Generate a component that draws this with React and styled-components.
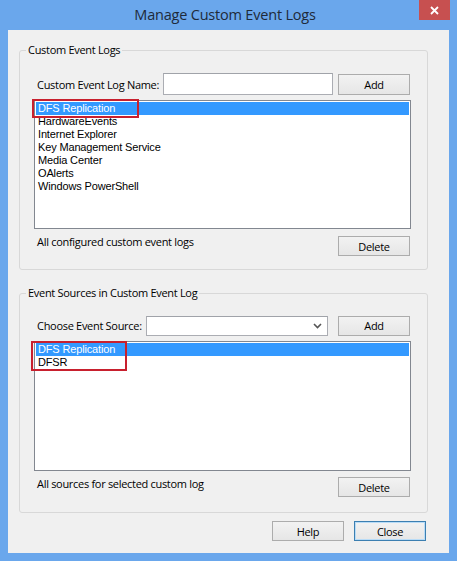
import React from 'react';
import styled, { createGlobalStyle } from 'styled-components';

const GlobalStyle = createGlobalStyle`
  html, body {
    margin: 0;
    padding: 0;
    background: #6aa7ec;
  }
`;

const uiFont = `"Open Sans", "Noto Sans", sans-serif`;
const listFont = `"Liberation Sans", Arial, sans-serif`;

const Window = styled.div`
  width: 457px;
  height: 561px;
  box-sizing: border-box;
  background: #6aa7ec;
  padding: 0 8px 8px 8px;
  display: flex;
  flex-direction: column;
`;

const TitleBar = styled.div`
  height: 30px;
  margin: 0 -1px 0 -8px;
  display: grid;
  grid-template-columns: 1fr auto 1fr;
  align-items: start;
`;

const Title = styled.div`
  grid-column: 2;
  padding-top: 5px;
  font-family: ${uiFont};
  font-size: 14.5px;
  letter-spacing: -0.2px;
  color: #1e2a3a;
  line-height: 20px;
`;

const CloseX = styled.div`
  grid-column: 3;
  justify-self: end;
  width: 31px;
  height: 20px;
  background: #c75050;
  display: flex;
  align-items: center;
  justify-content: center;
`;

const Client = styled.div`
  flex: 1;
  background: #f0f0f0;
  padding: 12px 21px 11px 11px;
  display: flex;
  flex-direction: column;
  font-family: ${uiFont};
  font-size: 11px;
  letter-spacing: -0.3px;
  color: #000;
`;

const Group = styled.fieldset`
  margin: 0 0 ${(p) => p.$gap || 0}px 0;
  min-width: 0;
  border: 1px solid #d8d8d8;
  border-radius: 3px;
  padding: ${(p) => p.$top}px 16px ${(p) => p.$bottom}px 14px;
  display: flex;
  flex-direction: column;
`;

const Legend = styled.legend`
  margin-left: -8px;
  padding: 0 2px;
  line-height: 16px;
  color: #000;
`;

const Row = styled.div`
  display: flex;
  align-items: center;
  height: ${(p) => p.$h}px;
`;

const Label = styled.div`
  flex: 1;
  padding-left: 3px;
  white-space: nowrap;
`;

const TextInput = styled.div`
  width: ${(p) => p.$w}px;
  height: ${(p) => p.$h}px;
  box-sizing: border-box;
  background: #fff;
  border: 1px solid #abadb3;
  border-top-color: #a0a3a9;
  display: flex;
  align-items: center;
  justify-content: flex-end;
  padding-right: 5px;
`;

const Button = styled.div`
  width: 72px;
  height: ${(p) => p.$h || 20}px;
  margin-left: ${(p) => p.$ml || 0}px;
  margin-right: 1px;
  margin-top: ${(p) => p.$mt || 0}px;
  box-sizing: border-box;
  border: 1px solid ${(p) => (p.$default ? '#3c7fb1' : '#acacac')};
  box-shadow: ${(p) => (p.$default ? 'inset 0 0 0 1px #b9dcf7' : 'none')};
  background: linear-gradient(#f2f2f2, #e6e6e6);
  display: flex;
  align-items: center;
  justify-content: center;
  line-height: 1;
  flex-shrink: 0;
`;

const ListBox = styled.div`
  position: relative;
  margin-top: 5px;
  height: ${(p) => p.$h}px;
  box-sizing: border-box;
  background: #fff;
  border: 1px solid #828790;
  padding: 1px 1px 0 1px;
  font-family: ${listFont};
  font-size: 11px;
  letter-spacing: -0.15px;
`;

const ListItem = styled.div`
  height: 13px;
  line-height: 13px;
  padding-left: 2px;
  white-space: nowrap;
  color: ${(p) => (p.$selected ? '#fff' : '#000')};
  background: ${(p) => (p.$selected ? '#3399ff' : 'transparent')};
`;

const Highlight = styled.div`
  position: absolute;
  left: ${(p) => p.$x}px;
  top: ${(p) => p.$y}px;
  width: ${(p) => p.$w}px;
  height: ${(p) => p.$h}px;
  box-sizing: border-box;
  border: 2px solid #c8202e;
  pointer-events: none;
`;

const Footer = styled.div`
  display: flex;
  align-items: flex-start;
  margin-top: 5px;
`;

const Note = styled.div`
  flex: 1;
  padding-left: 3px;
  line-height: 16px;
`;

const DialogButtons = styled.div`
  display: flex;
  justify-content: flex-end;
  gap: 9px;
  padding-right: 1px;
`;

const logs = [
  'DFS Replication',
  'HardwareEvents',
  'Internet Explorer',
  'Key Management Service',
  'Media Center',
  'OAlerts',
  'Windows PowerShell',
];

const sources = ['DFS Replication', 'DFSR'];

function Chevron() {
  return (
    <svg width="9" height="6" viewBox="0 0 9 6">
      <path d="M1 1 L4.5 4.5 L8 1" fill="none" stroke="#555" strokeWidth="1.6" />
    </svg>
  );
}

export default function App() {
  return (
    <>
      <GlobalStyle />
      <Window>
        <TitleBar>
          <Title>Manage Custom Event Logs</Title>
          <CloseX>
            <svg width="9" height="9" viewBox="0 0 9 9">
              <path d="M1 1 L8 8 M8 1 L1 8" stroke="#fff" strokeWidth="1.8" />
            </svg>
          </CloseX>
        </TitleBar>
        <Client>
          <Group $gap={15} $top={15} $bottom={13}>
            <Legend>Custom Event Logs</Legend>
            <Row $h={22}>
              <Label>Custom Event Log Name:</Label>
              <TextInput $w={170} $h={22} />
              <Button $ml={5} $h={21}>Add</Button>
            </Row>
            <ListBox $h={129}>
              {logs.map((l, i) => (
                <ListItem key={l} $selected={i === 0}>{l}</ListItem>
              ))}
              <Highlight $x={-3} $y={-2} $w={107} $h={19} />
            </ListBox>
            <Footer>
              <Note>All configured custom event logs</Note>
              <Button $mt={2}>Delete</Button>
            </Footer>
          </Group>
          <Group $gap={8} $top={14} $bottom={15}>
            <Legend>Event Sources in Custom Event Log</Legend>
            <Row $h={21}>
              <Label>Choose Event Source:</Label>
              <TextInput $w={182} $h={20}>
                <Chevron />
              </TextInput>
              <Button $ml={10}>Add</Button>
            </Row>
            <ListBox $h={130}>
              {sources.map((s, i) => (
                <ListItem key={s} $selected={i === 0}>{s}</ListItem>
              ))}
              <Highlight $x={-4} $y={-1} $w={96} $h={30} />
            </ListBox>
            <Footer>
              <Note>All sources for selected custom log</Note>
              <Button $mt={1}>Delete</Button>
            </Footer>
          </Group>
          <DialogButtons>
            <Button>Help</Button>
            <Button $default>Close</Button>
          </DialogButtons>
        </Client>
      </Window>
    </>
  );
}
